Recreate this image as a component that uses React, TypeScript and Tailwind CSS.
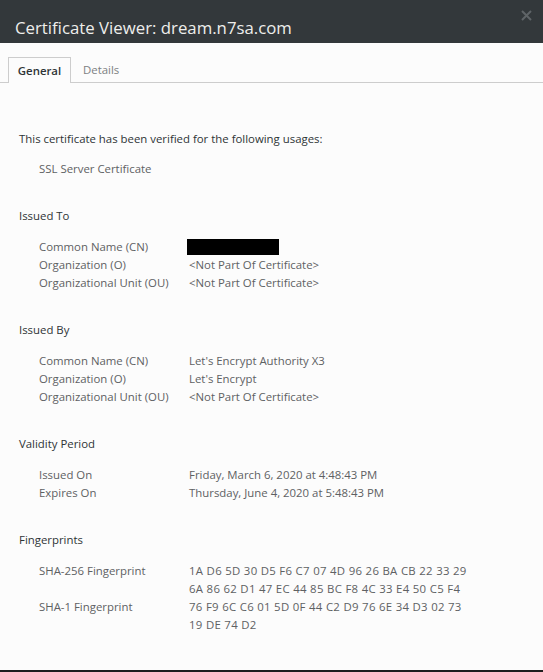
import React from "react";

const font = { fontFamily: '"Open Sans", "Noto Sans", sans-serif' };

function Row({ label, children }: { label: string; children: React.ReactNode }) {
  return (
    <div className="flex h-[18px] items-center">
      <div className="w-[150px] shrink-0 text-[#5e6163]">{label}</div>
      <div className="text-[#5e6163]">{children}</div>
    </div>
  );
}

function Section({ title, children }: { title: string; children: React.ReactNode }) {
  return (
    <div className="mt-[29px]">
      <div className="h-[18px] flex items-center text-[#2e3436]">{title}</div>
      <div className="mt-[13px] pl-[20px]">{children}</div>
    </div>
  );
}

export default function App() {
  return (
    <div className="w-[543px] h-[672px] bg-[#fcfcfc] flex flex-col overflow-hidden text-[11.4px]" style={font}>
      <div className="h-[43px] bg-[#33383b] relative shrink-0">
        <div className="absolute left-[15px] top-[16px] text-[16.8px] leading-[24px] text-[#eeeeec]">
          Certificate Viewer: dream.n7sa.com
        </div>
        <svg className="absolute left-[521px] top-[10px]" width="11" height="11" viewBox="0 0 11 11">
          <path d="M1 1 L10 10 M10 1 L1 10" stroke="#5f6467" strokeWidth="2" />
        </svg>
      </div>
      <div className="flex-1 flex flex-col">
        <div className="mt-[14px] flex items-end h-[26px] border-b border-[#cdcdcd]">
          <div className="ml-[8px] h-[26px] w-[63px] border border-b-0 border-[#cdcdcd] bg-[#fcfcfc] -mb-px flex items-center justify-center font-semibold text-[#2e3436]">
            General
          </div>
          <div className="h-[25px] ml-[12px] flex items-center text-[#7d8082]">Details</div>
        </div>
        <div className="pl-[19px] pt-[47px]">
          <div className="h-[18px] flex items-center text-[#2e3436]">
            This certificate has been verified for the following usages:
          </div>
          <div className="mt-[12px] pl-[20px] h-[18px] flex items-center text-[#5e6163]">SSL Server Certificate</div>

          <Section title="Issued To">
            <Row label="Common Name (CN)">
              <div className="w-[92px] h-[16px] bg-black -ml-[2px]" />
            </Row>
            <Row label="Organization (O)">&lt;Not Part Of Certificate&gt;</Row>
            <Row label="Organizational Unit (OU)">&lt;Not Part Of Certificate&gt;</Row>
          </Section>

          <Section title="Issued By">
            <Row label="Common Name (CN)">Let's Encrypt Authority X3</Row>
            <Row label="Organization (O)">Let's Encrypt</Row>
            <Row label="Organizational Unit (OU)">&lt;Not Part Of Certificate&gt;</Row>
          </Section>

          <Section title="Validity Period">
            <Row label="Issued On">Friday, March 6, 2020 at 4:48:43 PM</Row>
            <Row label="Expires On">Thursday, June 4, 2020 at 5:48:43 PM</Row>
          </Section>

          <Section title="Fingerprints">
            <div className="flex">
              <div className="w-[150px] shrink-0 text-[#5e6163] leading-[18px]">SHA-256 Fingerprint</div>
              <div className="text-[#5e6163] leading-[18px] tracking-[0.3px]">
                <div>1A D6 5D 30 D5 F6 C7 07 4D 96 26 BA CB 22 33 29</div>
                <div>6A 86 62 D1 47 EC 44 85 BC F8 4C 33 E4 50 C5 F4</div>
              </div>
            </div>
            <div className="flex">
              <div className="w-[150px] shrink-0 text-[#5e6163] leading-[18px]">SHA-1 Fingerprint</div>
              <div className="text-[#5e6163] leading-[18px] tracking-[0.3px]">
                <div>76 F9 6C C6 01 5D 0F 44 C2 D9 76 6E 34 D3 02 73</div>
                <div>19 DE 74 D2</div>
              </div>
            </div>
          </Section>
        </div>
      </div>
      <div className="h-[2px] bg-[#1e1e1e] shrink-0" />
    </div>
  );
}
